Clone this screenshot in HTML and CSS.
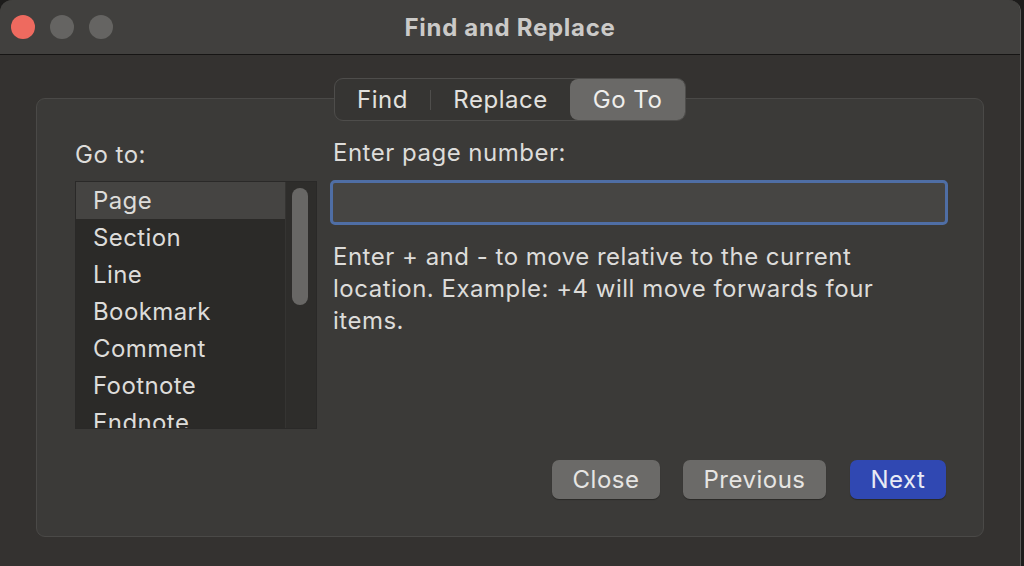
FILE: index.html
```html
<!DOCTYPE html>
<html lang="en">
<head>
    <meta charset="UTF-8">
    <meta name="viewport" content="width=device-width, initial-scale=1.0">
    <title>Find and Replace</title>
    <link rel="stylesheet" href="styles.css">
</head>
<body class="desk">
    <div class="window">
        <div class="titlebar">
            <div class="lights">
                <span class="light red"></span>
                <span class="light"></span>
                <span class="light"></span>
            </div>
            <div class="title">Find and Replace</div>
        </div>
        <div class="content">
            <div class="tabs">
                <div class="tab tab_find">Find</div>
                <div class="tab_sep"></div>
                <div class="tab tab_replace">Replace</div>
                <div class="tab tab_goto active">Go To</div>
            </div>
            <div class="group">
                <div class="columns">
                    <div class="left_col">
                        <div class="label">Go to:</div>
                        <div class="list">
                            <div class="rows">
                                <div class="row selected">Page</div>
                                <div class="row">Section</div>
                                <div class="row">Line</div>
                                <div class="row">Bookmark</div>
                                <div class="row">Comment</div>
                                <div class="row">Footnote</div>
                                <div class="row">Endnote</div>
                            </div>
                            <div class="scroll">
                                <div class="thumb"></div>
                            </div>
                        </div>
                    </div>
                    <div class="right_col">
                        <div class="label label_page">Enter page number:</div>
                        <div class="field"></div>
                        <p class="help">Enter + and - to move relative to the current location. Example: +4 will move forwards four items.</p>
                    </div>
                </div>
                <div class="buttons">
                    <div class="btn btn_close">Close</div>
                    <div class="btn btn_prev">Previous</div>
                    <div class="btn btn_next">Next</div>
                </div>
            </div>
        </div>
    </div>
</body>
</html>
```

FILE: styles.css
```css
body {
    margin: 0;
}
.desk {
    background: #1d1c1b;
    font-family: Inter, "Noto Sans", sans-serif;
    color: #dddcda;
    height: 566px;
    overflow: hidden;
}
.window {
    width: 1020px;
    height: 566px;
    background: #343230;
    border-radius: 12px 12px 0 0;
    border-right: 1px solid #5a5957;
    overflow: hidden;
}
.titlebar {
    height: 54px;
    background: #41403e;
    border-bottom: 1px solid #161514;
    display: flex;
    align-items: center;
    position: relative;
}
.lights {
    display: flex;
    gap: 15px;
    padding-left: 11px;
}
.light {
    width: 24px;
    height: 24px;
    border-radius: 50%;
    background: #656462;
}
.red {
    background: #ee6a5f;
}
.title {
    position: absolute;
    left: 0;
    right: 0;
    text-align: center;
    font-size: 24px;
    font-weight: 700;
    color: #cbcac8;
    letter-spacing: 0.7px;
}
.content {
    padding: 23px 0 0 36px;
    width: 948px;
}
.tabs {
    margin: 0 auto;
    width: 350px;
    height: 41px;
    display: flex;
    align-items: center;
    background: #363533;
    border: 1px solid #4e4d4b;
    border-radius: 9px;
    position: relative;
    z-index: 1;
    font-size: 24px;
    letter-spacing: 0.5px;
}
.tab {
    height: 41px;
    display: flex;
    align-items: center;
    justify-content: center;
    color: #e2e1df;
}
.tab_find {
    width: 95px;
}
.tab_sep {
    width: 1px;
    height: 20px;
    background: #4f4e4c;
}
.tab_replace {
    width: 139px;
}
.tab_goto {
    width: 115px;
}
.active {
    background: #6a6967;
    border-radius: 8px;
    color: #efeeec;
}
.group {
    margin-top: -23px;
    height: 437px;
    background: #3b3a38;
    border: 1px solid #4a4947;
    border-radius: 9px;
    display: flex;
    flex-direction: column;
    padding: 0 35px 0 38px;
}
.columns {
    display: flex;
    gap: 13px;
    padding-top: 42px;
}
.label {
    font-size: 24px;
    letter-spacing: 0.5px;
    line-height: 28px;
    margin-bottom: 12px;
}
.label_page {
    padding-left: 3px;
    margin-bottom: 13px;
    margin-top: -2px;
}
.left_col {
    width: 242px;
    flex: none;
}
.list {
    height: 246px;
    border: 1px solid #2a2928;
    background: #2b2a28;
    display: flex;
    overflow: hidden;
}
.rows {
    flex: 1;
    font-size: 24px;
    letter-spacing: 0.4px;
}
.row {
    height: 37px;
    line-height: 37px;
    padding-left: 17px;
}
.selected {
    background: #454442;
}
.scroll {
    flex: none;
    width: 24px;
    border-left: 1px solid #353432;
    background: #2e2d2b;
    padding: 6px 0 0 6px;
}
.thumb {
    width: 16px;
    height: 117px;
    border-radius: 8px;
    background: #686765;
}
.right_col {
    flex: 1;
}
.field {
    height: 39px;
    border: 3px solid #4f6ea5;
    border-radius: 5px;
    background: #464543;
}
.help {
    margin: 16px 0 0 3px;
    max-width: 560px;
    font-size: 24px;
    letter-spacing: 0.5px;
    line-height: 32px;
}
.buttons {
    margin-top: auto;
    margin-bottom: 37px;
    padding-right: 2px;
    display: flex;
    justify-content: flex-end;
    gap: 23px;
}
.btn {
    height: 39px;
    border-radius: 7px;
    background: #6b6a68;
    display: flex;
    align-items: center;
    justify-content: center;
    font-size: 24px;
    letter-spacing: 0.5px;
    color: #e6e5e3;
    box-shadow: 0 1px 1px rgba(0, 0, 0, 0.3);
}
.btn_close {
    width: 108px;
}
.btn_prev {
    width: 143px;
    margin-right: 1px;
}
.btn_next {
    width: 96px;
    background: #3048b2;
    color: #e8ebf5;
}
```
